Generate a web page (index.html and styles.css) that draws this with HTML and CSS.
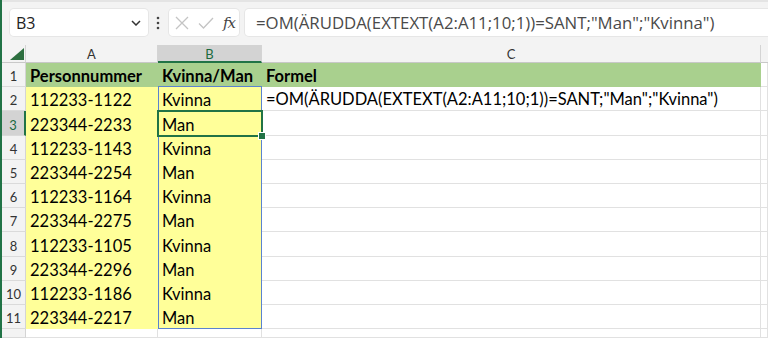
FILE: index.html
```html
<!DOCTYPE html>
<html lang="sv">
  <head>
    <meta charset="UTF-8" />
    <meta name="viewport" content="width=device-width, initial-scale=1.0" />
    <title>Kvinna/Man</title>
    <link rel="stylesheet" href="styles.css">
  </head>

  <body>
    <div class="window">
      <div class="toolbar">
        <div class="namebox">
          <span class="cellref">B3</span>
          <svg class="chev" width="10" height="6" viewBox="0 0 10 6">
            <path d="M1 1 L5 5 L9 1" fill="none" stroke="#333" stroke-width="1.5" />
          </svg>
        </div>
        <svg class="dots" width="4" height="14" viewBox="0 0 4 14">
          <circle cx="2" cy="2" r="1.3" fill="#444" />
          <circle cx="2" cy="7" r="1.3" fill="#444" />
          <circle cx="2" cy="12" r="1.3" fill="#444" />
        </svg>
        <div class="fx-box">
          <svg width="14" height="14" viewBox="0 0 14 14">
            <path d="M1 1 L13 13 M13 1 L1 13" stroke="#c4c4c4" stroke-width="1.3" fill="none" />
          </svg>
          <svg width="16" height="12" viewBox="0 0 16 12">
            <path d="M1 6.5 L5.5 11 L15 1" stroke="#c4c4c4" stroke-width="1.3" fill="none" />
          </svg>
          <span class="fx">fx</span>
        </div>
        <div class="formula-input">=OM(ÄRUDDA(EXTEXT(A2:A11;10;1))=SANT;"Man";"Kvinna")</div>
      </div>

      <div class="sheet">
        <div class="corner">
          <svg width="14" height="12" viewBox="0 0 14 12">
            <path d="M0 12 L14 12 L14 0 Z" fill="#2c6e3f" />
          </svg>
        </div>
        <div class="colhead">A</div>
        <div class="colhead active">B</div>
        <div class="colhead">C</div>
        <div class="colhead end"></div>

        <div class="rowhead">1</div>
        <div class="cell head">Personnummer</div>
        <div class="cell head">Kvinna/Man</div>
        <div class="cell head">Formel</div>
        <div class="cell"></div>

        <div class="rowhead">2</div>
        <div class="cell yellow">112233-1122</div>
        <div class="cell yellow">Kvinna</div>
        <div class="cell">=OM(ÄRUDDA(EXTEXT(A2:A11;10;1))=SANT;"Man";"Kvinna")</div>
        <div class="cell"></div>

        <div class="rowhead active">3</div>
        <div class="cell yellow">223344-2233</div>
        <div class="cell yellow">Man</div>
        <div class="cell"></div>
        <div class="cell"></div>

        <div class="rowhead">4</div>
        <div class="cell yellow">112233-1143</div>
        <div class="cell yellow">Kvinna</div>
        <div class="cell"></div>
        <div class="cell"></div>

        <div class="rowhead">5</div>
        <div class="cell yellow">223344-2254</div>
        <div class="cell yellow">Man</div>
        <div class="cell"></div>
        <div class="cell"></div>

        <div class="rowhead">6</div>
        <div class="cell yellow">112233-1164</div>
        <div class="cell yellow">Kvinna</div>
        <div class="cell"></div>
        <div class="cell"></div>

        <div class="rowhead">7</div>
        <div class="cell yellow">223344-2275</div>
        <div class="cell yellow">Man</div>
        <div class="cell"></div>
        <div class="cell"></div>

        <div class="rowhead">8</div>
        <div class="cell yellow">112233-1105</div>
        <div class="cell yellow">Kvinna</div>
        <div class="cell"></div>
        <div class="cell"></div>

        <div class="rowhead">9</div>
        <div class="cell yellow">223344-2296</div>
        <div class="cell yellow">Man</div>
        <div class="cell"></div>
        <div class="cell"></div>

        <div class="rowhead">10</div>
        <div class="cell yellow">112233-1186</div>
        <div class="cell yellow">Kvinna</div>
        <div class="cell"></div>
        <div class="cell"></div>

        <div class="rowhead">11</div>
        <div class="cell yellow">223344-2217</div>
        <div class="cell yellow">Man</div>
        <div class="cell"></div>
        <div class="cell"></div>

        <div class="rowhead"></div>
        <div class="cell"></div>
        <div class="cell"></div>
        <div class="cell"></div>
        <div class="cell"></div>

        <div class="spill"></div>
        <div class="selection"><span class="handle"></span></div>
      </div>
    </div>
  </body>
</html>
```

FILE: styles.css
```css
body {
  margin: 0;
  font-family: Lato, "Open Sans", sans-serif;
  background: #ffffff;
  overflow: hidden;
}

.window {
  width: 766px;
  height: 338px;
  border-left: 2px solid #217346;
  display: flex;
  flex-direction: column;
}

.toolbar {
  height: 45px;
  flex: none;
  border-top: 2px solid #e4e4e4;
  background: #f3f3f3;
  display: flex;
  align-items: flex-start;
  padding: 7px 0 0 8px;
  box-sizing: border-box;
  font-family: "Open Sans", "Noto Sans", sans-serif;
}

.namebox {
  width: 138px;
  height: 27px;
  background: #ffffff;
  border-radius: 4px;
  box-shadow: 0 0 0 1px #e6e6e6;
  display: flex;
  align-items: center;
  justify-content: space-between;
  padding: 0 7px 0 6px;
  box-sizing: border-box;
}

.cellref {
  font-size: 16px;
  color: #222;
}

.dots {
  margin: 7px 9px 0 8px;
}

.fx-box {
  width: 70px;
  height: 27px;
  background: #ffffff;
  border-radius: 4px;
  box-shadow: 0 0 0 1px #e6e6e6;
  display: flex;
  align-items: center;
  gap: 9px;
  padding-left: 6px;
  box-sizing: border-box;
}

.fx {
  font-family: "DejaVu Serif", "Liberation Serif", serif;
  font-style: italic;
  font-size: 15px;
  color: #444;
  letter-spacing: -1px;
}

.formula-input {
  flex: 1;
  height: 27px;
  margin-left: 6px;
  background: #ffffff;
  border-radius: 4px 0 0 4px;
  box-shadow: 0 0 0 1px #e6e6e6;
  padding-left: 11px;
  font-size: 16.8px;
  line-height: 27px;
  color: #4a4a4a;
  white-space: nowrap;
  overflow: hidden;
}

.sheet {
  flex: 1;
  display: grid;
  grid-template-columns: 24px 132px 104px 499px 1fr;
  grid-template-rows: 18px repeat(11, 24.2px) 1fr;
  position: relative;
  overflow: hidden;
}

.corner {
  background: #f3f3f3;
  border-right: 1px solid #d4d4d4;
  border-bottom: 1px solid #c8c8c8;
  display: flex;
  align-items: flex-end;
  justify-content: flex-end;
  padding: 0 1px 2px 0;
  box-sizing: border-box;
}

.colhead {
  background: #f3f3f3;
  border-right: 1px solid #d4d4d4;
  border-bottom: 1px solid #c8c8c8;
  font-size: 13px;
  color: #333;
  text-align: center;
  line-height: 18px;
  box-sizing: border-box;
}

.colhead.active {
  background: #d3d3d3;
  color: #1b6a3e;
  border-bottom: 2px solid #217346;
}

.colhead.end {
  border-right: none;
}

.rowhead {
  background: #f3f3f3;
  border-right: 1px solid #d4d4d4;
  border-bottom: 1px solid #dadada;
  font-size: 13px;
  color: #333;
  text-align: center;
  display: flex;
  align-items: flex-end;
  justify-content: center;
  padding-bottom: 2px;
  box-sizing: border-box;
}

.rowhead.active {
  background: #d3d3d3;
  color: #1b6a3e;
  border-right: 2px solid #217346;
}

.cell {
  border-right: 1px solid #e1e1e1;
  border-bottom: 1px solid #e1e1e1;
  font-size: 16.5px;
  color: #000;
  display: flex;
  align-items: flex-end;
  padding: 0 0 1px 4px;
  box-sizing: border-box;
  white-space: nowrap;
}

.cell.head {
  background: #a9d08e;
  border: none;
  font-weight: bold;
}

.cell.yellow {
  background: #ffff99;
  border: none;
}

.spill {
  position: absolute;
  inset: -1px 0 0 0;
  grid-column: 3 / 4;
  grid-row: 3 / 13;
  border: 1px solid #5b83cf;
  pointer-events: none;
}

.selection {
  position: absolute;
  inset: -1px;
  grid-column: 3 / 4;
  grid-row: 4 / 5;
  border: 2px solid #217346;
  pointer-events: none;
}

.handle {
  position: absolute;
  right: -5px;
  bottom: -5px;
  width: 6px;
  height: 6px;
  background: #217346;
  border: 1px solid #ffffff;
}
```
